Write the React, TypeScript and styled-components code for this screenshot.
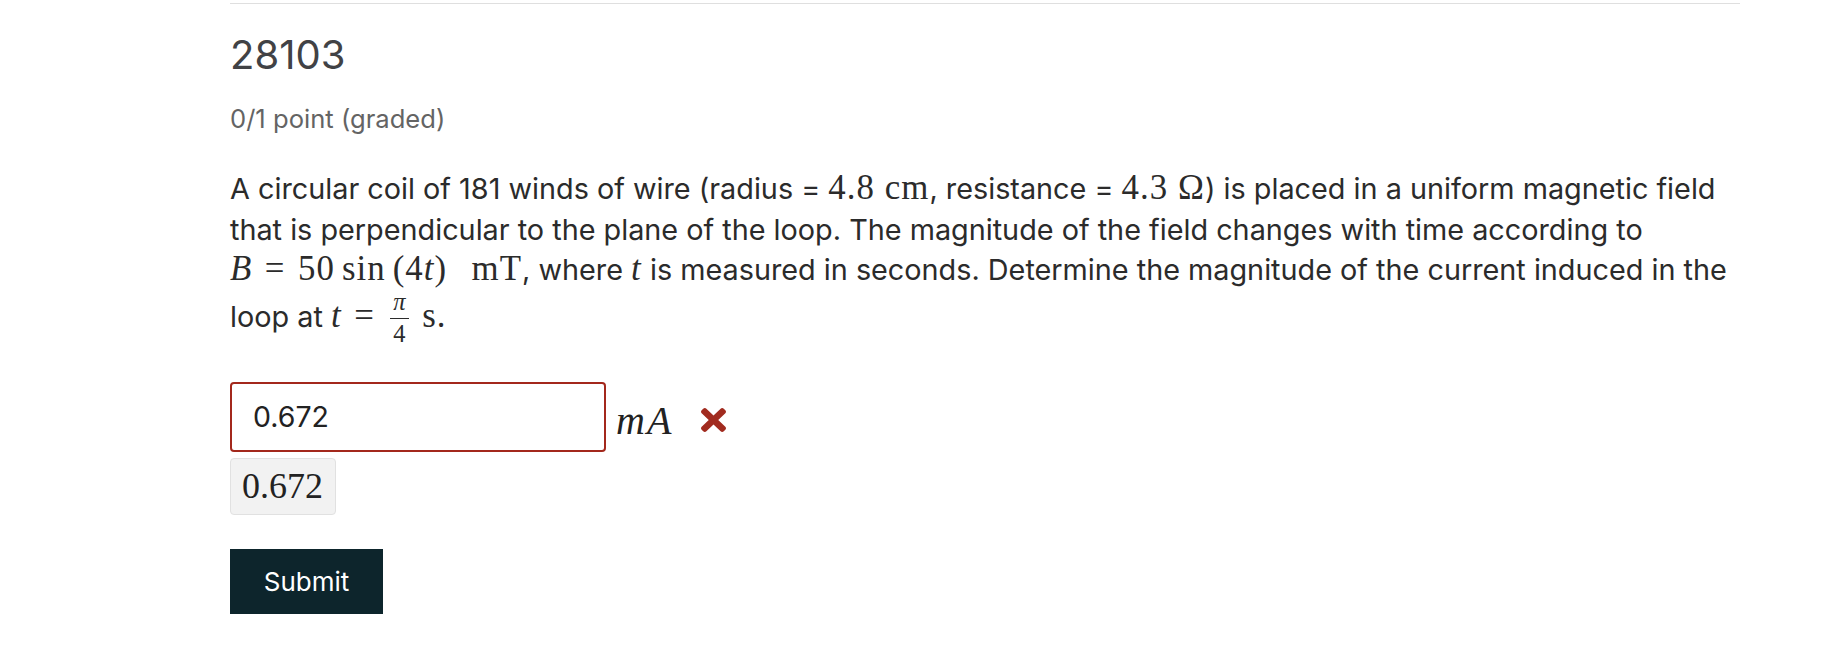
import React from "react";
import styled, { createGlobalStyle } from "styled-components";

const Global = createGlobalStyle`
  html, body { margin: 0; padding: 0; background: #ffffff; }
  body { font-family: Inter, "Noto Sans", sans-serif; color: #2b2b2b; }
`;

const Page = styled.div`
  padding: 3px 0 0 230px;
`;

const Problem = styled.section`
  width: 1510px;
  border-top: 1px solid #dfdfdf;
  padding-top: 27px;
`;

const Title = styled.h3`
  margin: 0;
  font-size: 40px;
  font-weight: 400;
  line-height: 1.2;
  color: #414245;
`;

const Status = styled.div`
  margin-top: 21px;
  font-size: 25.6px;
  line-height: 1.5;
  color: #646464;
`;

const Para = styled.p`
  margin: 31px 0 0;
  font-size: 28.8px;
  line-height: 1.4;
  color: #2b2b2b;
`;

const M = styled.span`
  font-family: "Liberation Serif", "DejaVu Serif", serif;
  font-size: 1.21em;
  line-height: 1;
  letter-spacing: 0.03em;
  white-space: nowrap;
`;

const Var = styled.i`
  font-style: italic;
`;

const Rel = styled.span`
  margin: 0 0.36em;
`;

const Space = styled.span<{ $w: number }>`
  display: inline-block;
  width: ${(p) => p.$w}em;
`;

const Frac = styled.span`
  display: inline-flex;
  flex-direction: column;
  align-items: center;
  font-size: 0.7em;
  line-height: 1;
  vertical-align: 0.7em;
  margin: 0 0.12em;
`;

const Num = styled.span`
  padding: 0 0.12em 0.14em;
  border-bottom: 1px solid #2b2b2b;
`;

const Den = styled.span`
  padding-top: 0.2em;
  line-height: 0.8;
`;

const AnswerRow = styled.div`
  display: flex;
  align-items: center;
  margin-top: 38px;
`;

const Input = styled.input`
  box-sizing: border-box;
  width: 376px;
  height: 70px;
  border: 2px solid #a3281c;
  border-radius: 4px;
  padding: 0 0 0 21px;
  font-family: Inter, "Noto Sans", sans-serif;
  font-size: 28.5px;
  color: #222222;
  background: #ffffff;
  outline: none;
`;

const Unit = styled.span`
  margin: 8px 0 0 10px;
  font-family: "Liberation Serif", "DejaVu Serif", serif;
  font-style: italic;
  font-size: 40px;
  letter-spacing: 2px;
  color: #222222;
`;

const Mark = styled.span`
  display: flex;
  margin: 6px 0 0 28px;
  color: #a12b1f;
`;

const Preview = styled.div`
  box-sizing: border-box;
  display: flex;
  align-items: center;
  width: 106px;
  height: 57px;
  margin-top: 6px;
  padding: 0 11px;
  background: #f2f2f2;
  border: 1px solid #e1e1e1;
  border-radius: 4px;
  font-family: "Liberation Serif", "DejaVu Serif", serif;
  font-size: 36px;
  color: #222222;
`;

const Submit = styled.button`
  display: block;
  width: 153px;
  height: 65px;
  margin-top: 34px;
  border: 0;
  border-radius: 0;
  background: #0d252c;
  color: #ffffff;
  font-family: Inter, "Noto Sans", sans-serif;
  font-size: 26px;
  cursor: pointer;
`;

const WrongIcon = () => (
  <svg width="25" height="24" viewBox="0 80 352 352" preserveAspectRatio="none" fill="currentColor" aria-hidden="true">
    <path d="M242.72 256l100.07-100.07c12.28-12.28 12.28-32.19 0-44.48l-22.24-22.24c-12.28-12.28-32.19-12.28-44.48 0L176 189.28 75.93 89.21c-12.28-12.28-32.19-12.28-44.48 0L9.21 111.45c-12.28 12.28-12.28 32.19 0 44.48L109.28 256 9.21 356.07c-12.28 12.28-12.28 32.19 0 44.48l22.24 22.24c12.28 12.28 32.2 12.28 44.48 0L176 322.72l100.07 100.07c12.28 12.28 32.2 12.28 44.48 0l22.24-22.24c12.28-12.28 12.28-32.19 0-44.48L242.72 256z" />
  </svg>
);

export default function App() {
  return (
    <>
      <Global />
      <Page>
        <Problem>
          <Title>28103</Title>
          <Status>0/1 point (graded)</Status>
          <Para>
            A circular coil of 181 winds of wire (radius = <M>4.8 cm</M>, resistance ={" "}
            <M>4.3 Ω</M>) is placed in a uniform magnetic field that is perpendicular to the plane of
            the loop. The magnitude of the field changes with time according to{" "}
            <M>
              <Var>B</Var>
              <Rel>=</Rel>50<Space $w={0.2} />sin<Space $w={0.2} />(4<Var>t</Var>)
              <Space $w={0.7} />mT
            </M>
            , where <M><Var>t</Var></M> is measured in seconds. Determine the magnitude of the current
            induced in the loop at{" "}
            <M>
              <Var>t</Var>
              <Rel>=</Rel>
              <Frac>
                <Num>
                  <Var>π</Var>
                </Num>
                <Den>4</Den>
              </Frac>{" "}
              s.
            </M>
          </Para>
          <AnswerRow>
            <Input type="text" defaultValue="0.672" aria-label="answer" />
            <Unit>mA</Unit>
            <Mark>
              <WrongIcon />
            </Mark>
          </AnswerRow>
          <Preview>0.672</Preview>
          <Submit type="button">Submit</Submit>
        </Problem>
      </Page>
    </>
  );
}
